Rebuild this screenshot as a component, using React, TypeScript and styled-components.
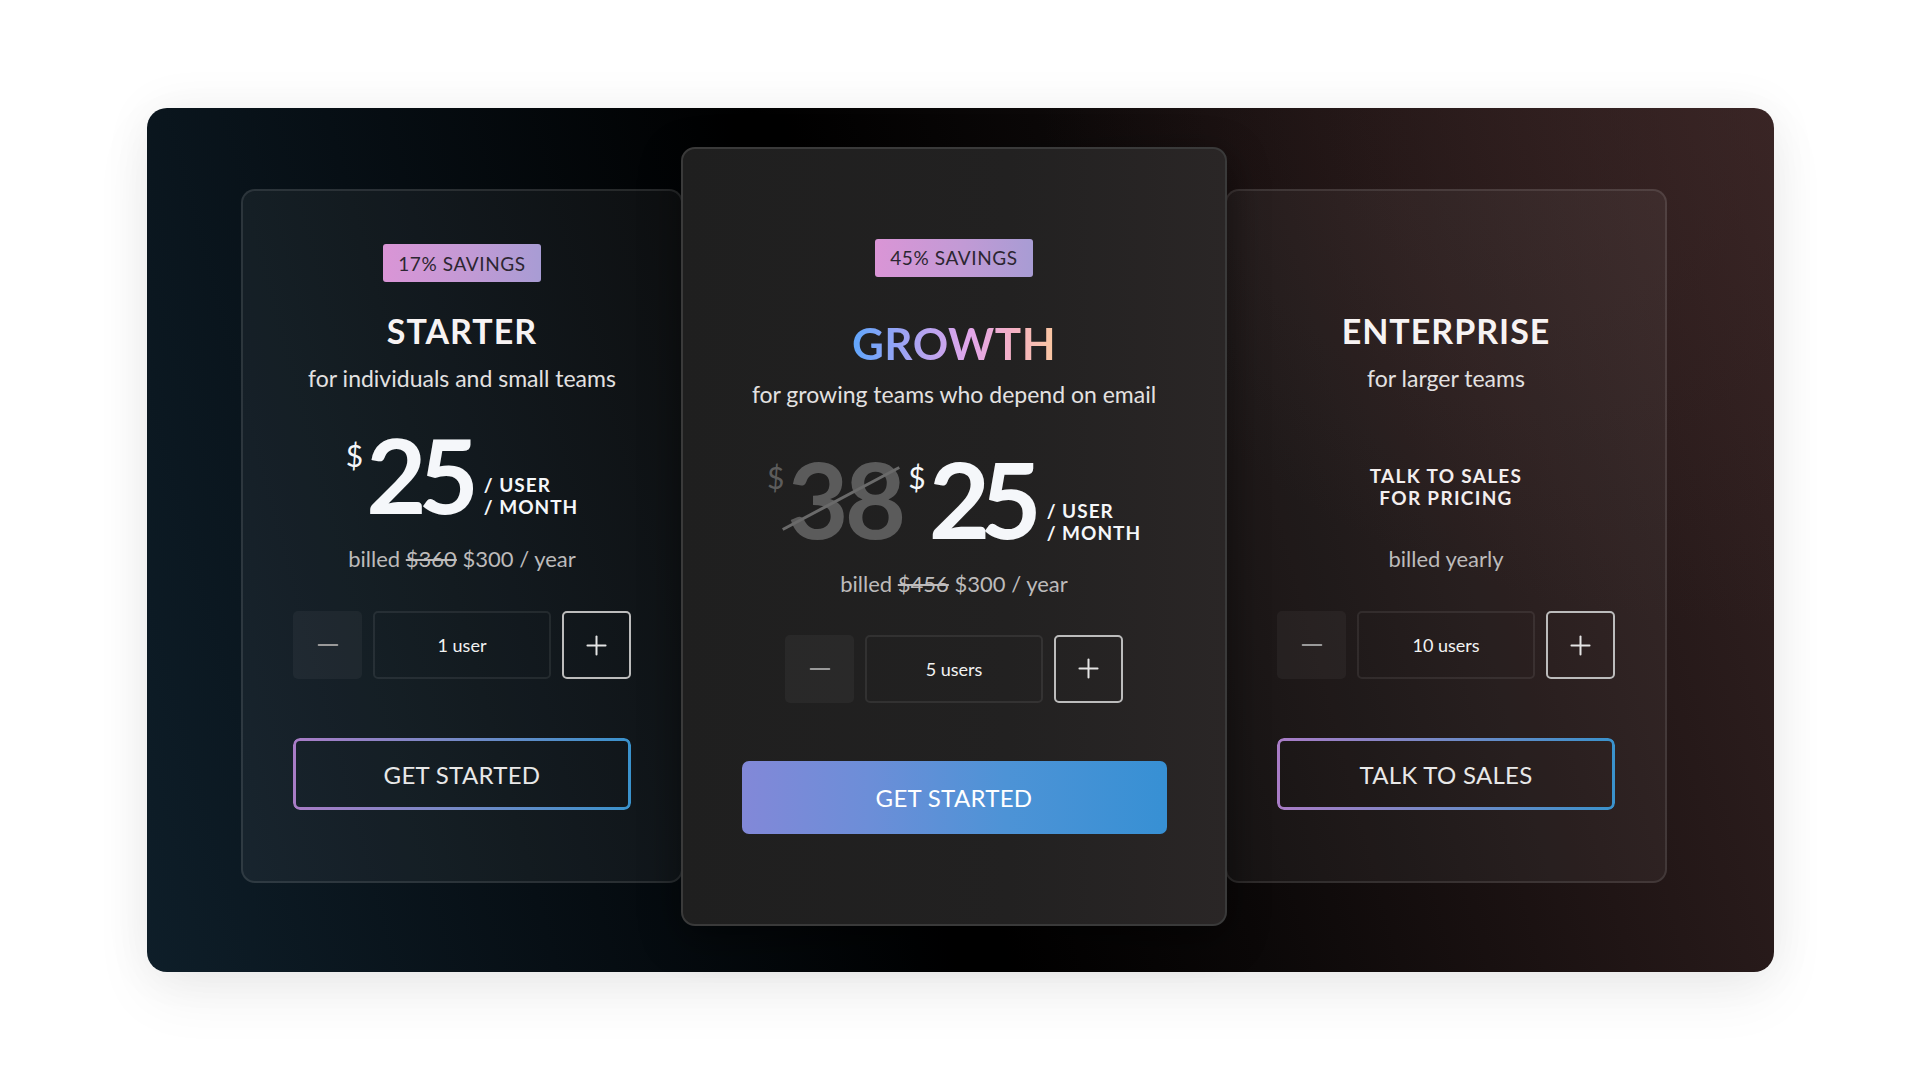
import React from "react";
import styled, {createGlobalStyle, css} from "styled-components";
import {Minus, Plus} from "lucide-react";

const GlobalStyle = createGlobalStyle`
  body {
    margin: 0;
    background: #ffffff;
    font-family: Lato, "Open Sans", sans-serif;
  }
  * { box-sizing: border-box; }
`

const Page = styled.div`
  height: 100vh;
  display: flex;
  align-items: center;
  justify-content: center;
`

const Board = styled.section`
  width: 1627px;
  height: 864px;
  border-radius: 20px;
  display: flex;
  align-items: center;
  justify-content: center;
  padding: 0 12px 8px 0;
  background:
    radial-gradient(ellipse 45% 60% at 100% 0%, rgba(64, 40, 40, 0.5), rgba(64, 40, 40, 0) 100%),
    linear-gradient(75deg, #0e1e29 0%, #070f15 22%, #000 45%, #0b0808 60%, #201515 80%, #332222 100%);
  box-shadow: 0 0 50px rgba(0, 0, 0, 0.06), 0 24px 60px rgba(0, 0, 0, 0.06);
`

const Card = styled.div<{ $featured?: boolean }>`
  position: relative;
  display: flex;
  flex-direction: column;
  align-items: center;
  border-radius: 14px;
  width: ${p => p.$featured ? 546 : 442}px;
  height: ${p => p.$featured ? 779 : 694}px;
  padding-top: ${p => p.$featured ? 90 : 53}px;
  ${p => p.$featured ? css`
    z-index: 1;
    margin: 0 -2px;
    background: linear-gradient(90deg, #1f1f1f 0%, #222121 60%, #2a2626 100%);
    border: 2px solid #3a3a3a;
    box-shadow: 0 12px 40px rgba(0, 0, 0, 0.45);
  ` : css`
    background: rgba(255, 255, 255, 0.05);
    border: 2px solid rgba(255, 255, 255, 0.1);
  `}
`

const Badge = styled.div<{ $empty?: boolean }>`
  height: 38px;
  padding: 0 15px;
  display: flex;
  align-items: center;
  border-radius: 3px;
  font-size: 19px;
  letter-spacing: 0.6px;
  color: #2c2631;
  background: linear-gradient(90deg, #da95d6 0%, #c29ad5 55%, #a89cd4 100%);
  visibility: ${p => p.$empty ? 'hidden' : 'visible'};
`

const Title = styled.h2<{ $featured?: boolean }>`
  margin: ${p => p.$featured ? 40 : 29}px 0 0;
  font-size: ${p => p.$featured ? 44 : 34}px;
  line-height: ${p => p.$featured ? 52 : 40}px;
  font-weight: 700;
  letter-spacing: ${p => p.$featured ? 0.5 : 1}px;
  color: #f7f3f3;
  ${p => p.$featured && css`
    background: linear-gradient(90deg, #5fa6fc 0%, #a9a3f2 30%, #e3a6ea 58%, #f3afc6 78%, #fbc8a0 100%);
    -webkit-background-clip: text;
    background-clip: text;
    color: transparent;
  `}
`

const Tagline = styled.p<{ $featured?: boolean }>`
  margin: ${p => p.$featured ? 11 : 13}px 0 0;
  font-size: 23px;
  line-height: 28px;
  color: #e3e1e1;
`

const PriceRow = styled.div<{ $featured?: boolean }>`
  margin-top: ${p => p.$featured ? 36 : 30}px;
  height: ${p => p.$featured ? 108 : 104}px;
  display: flex;
  justify-content: center;
`

const Currency = styled.span<{ $muted?: boolean }>`
  font-size: 30px;
  line-height: 30px;
  margin: 18px 3px 0 0;
  color: ${p => p.$muted ? '#5c5c5c' : '#f5f7fa'};
`

// big figure; the struck-out variant carries a diagonal line across it
const Amount = styled.span<{ $featured?: boolean, $muted?: boolean }>`
  position: relative;
  font-size: ${p => p.$featured ? 106 : 104}px;
  line-height: ${p => p.$featured ? 108 : 104}px;
  font-weight: 700;
  letter-spacing: ${p => p.$featured ? -10 : -8}px;
  padding-right: ${p => p.$featured ? 10 : 8}px;
  color: ${p => p.$muted ? '#5b5b5b' : '#f5f7fa'};
  ${p => p.$muted && css`
    letter-spacing: -4px;
    padding-right: 4px;
    margin-right: 2px;

    &::after {
      content: '';
      position: absolute;
      left: 50%;
      top: 50%;
      width: 132px;
      height: 3px;
      margin: -1px 0 0 -72px;
      background: #6a6a6a;
      transform: rotate(-28deg);
    }
  `}
`

const Unit = styled.span`
  align-self: flex-end;
  margin: 0 0 8px 5px;
  font-size: 19px;
  line-height: 22px;
  font-weight: 700;
  letter-spacing: 1px;
  color: #f5f7fa;
`

const SalesNote = styled.div`
  margin-top: 30px;
  height: 104px;
  display: flex;
  align-items: flex-end;
  padding-bottom: 17px;
  text-align: center;
  font-size: 19px;
  line-height: 22px;
  font-weight: 700;
  letter-spacing: 1.3px;
  color: #f3eeee;
`

const Billed = styled.p<{ $featured?: boolean }>`
  margin: ${p => p.$featured ? 18 : 19}px 0 0;
  font-size: 22px;
  line-height: 28px;
  color: #bdbbbb;

  s {
    text-decoration-thickness: 2px;
  }
`

const Stepper = styled.div<{ $featured?: boolean }>`
  margin-top: ${p => p.$featured ? 37 : 38}px;
  display: flex;
  gap: 11px;
`

const StepButton = styled.button<{ $outlined?: boolean }>`
  width: 69px;
  height: 68px;
  display: flex;
  align-items: center;
  justify-content: center;
  border-radius: 5px;
  padding: 0;
  cursor: pointer;
  ${p => p.$outlined ? css`
    background: transparent;
    border: 2px solid #bcbcbc;
    color: #e4e4e4;
  ` : css`
    background: rgba(255, 255, 255, 0.045);
    border: none;
    color: #9a9a9a;
  `}
`

const SeatField = styled.div`
  width: 178px;
  height: 68px;
  display: flex;
  align-items: center;
  justify-content: center;
  border: 2px solid rgba(255, 255, 255, 0.08);
  border-radius: 5px;
  font-size: 18px;
  color: #f2f2f2;
`

const Cta = styled.button<{ $featured?: boolean }>`
  position: relative;
  margin-top: ${p => p.$featured ? 58 : 59}px;
  width: ${p => p.$featured ? 425 : 338}px;
  height: ${p => p.$featured ? 73 : 72}px;
  border: none;
  border-radius: 7px;
  font-family: inherit;
  font-size: 24px;
  letter-spacing: 0.3px;
  cursor: pointer;
  ${p => p.$featured ? css`
    color: #ffffff;
    background: linear-gradient(90deg, #8288d8 0%, #6c8ed8 30%, #4d93d6 62%, #3790d4 100%);
  ` : css`
    color: #e8e8e8;
    background: transparent;

    /* gradient outline */
    &::before {
      content: '';
      position: absolute;
      inset: 0;
      padding: 3px;
      border-radius: 7px;
      background: linear-gradient(90deg, #a97cc6 0%, #7a89c6 45%, #3a92cc 100%);
      -webkit-mask: linear-gradient(#000 0 0) content-box, linear-gradient(#000 0 0);
      -webkit-mask-composite: xor;
      mask-composite: exclude;
    }
  `}
`

type Plan = {
  name: string
  tagline: string
  savings?: string
  featured?: boolean
  oldPrice?: number
  price?: number
  billedWas?: string
  billedNow: string
  seats: string
  cta: string
}

const plans: Plan[] = [
  {
    name: 'STARTER',
    tagline: 'for individuals and small teams',
    savings: '17% SAVINGS',
    price: 25,
    billedWas: '$360',
    billedNow: '$300 / year',
    seats: '1 user',
    cta: 'GET STARTED',
  },
  {
    name: 'GROWTH',
    tagline: 'for growing teams who depend on email',
    savings: '45% SAVINGS',
    featured: true,
    oldPrice: 38,
    price: 25,
    billedWas: '$456',
    billedNow: '$300 / year',
    seats: '5 users',
    cta: 'GET STARTED',
  },
  {
    name: 'ENTERPRISE',
    tagline: 'for larger teams',
    billedNow: 'yearly',
    seats: '10 users',
    cta: 'TALK TO SALES',
  },
]

const PlanCard: React.FC<{ plan: Plan }> = ({plan}) => {
  const featured = plan.featured
  return <Card $featured={featured}>
    <Badge $empty={!plan.savings}>{plan.savings ?? 'SAVINGS'}</Badge>
    <Title $featured={featured}>{plan.name}</Title>
    <Tagline $featured={featured}>{plan.tagline}</Tagline>
    {plan.price !== undefined ?
      <PriceRow $featured={featured}>
        {plan.oldPrice !== undefined && <>
          <Currency $muted>$</Currency>
          <Amount $featured={featured} $muted>{plan.oldPrice}</Amount>
        </>}
        <Currency>$</Currency>
        <Amount $featured={featured}>{plan.price}</Amount>
        <Unit>/ USER<br/>/ MONTH</Unit>
      </PriceRow>
      :
      <SalesNote>TALK TO SALES<br/>FOR PRICING</SalesNote>
    }
    <Billed $featured={featured}>
      billed {plan.billedWas && <><s>{plan.billedWas}</s> </>}{plan.billedNow}
    </Billed>
    <Stepper $featured={featured}>
      <StepButton aria-label="remove seat"><Minus size={32} strokeWidth={2} absoluteStrokeWidth/></StepButton>
      <SeatField>{plan.seats}</SeatField>
      <StepButton $outlined aria-label="add seat"><Plus size={31} strokeWidth={2} absoluteStrokeWidth/></StepButton>
    </Stepper>
    <Cta $featured={featured}>{plan.cta}</Cta>
  </Card>
}

export default function App() {
  return <>
    <GlobalStyle/>
    <Page>
      <Board>
        {plans.map(plan => <PlanCard key={plan.name} plan={plan}/>)}
      </Board>
    </Page>
  </>
}
